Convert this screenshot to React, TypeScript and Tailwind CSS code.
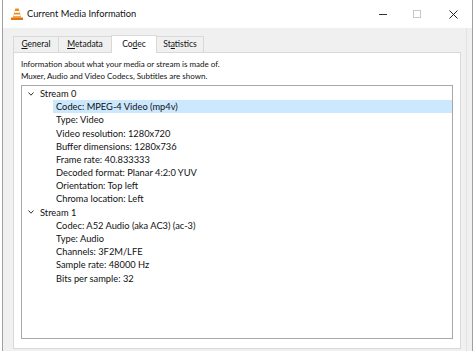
import React from "react";

const tabs = [
  { label: "General", u: 0, w: "w-[46px]" },
  { label: "Metadata", u: 0, w: "w-[54px]" },
  { label: "Codec", u: 2, w: "w-[46px]" },
  { label: "Statistics", u: 2, w: "w-[48px]" },
];

const streams = [
  {
    name: "Stream 0",
    items: [
      "Codec: MPEG-4 Video (mp4v)",
      "Type: Video",
      "Video resolution: 1280x720",
      "Buffer dimensions: 1280x736",
      "Frame rate: 40.833333",
      "Decoded format: Planar 4:2:0 YUV",
      "Orientation: Top left",
      "Chroma location: Left",
    ],
  },
  {
    name: "Stream 1",
    items: [
      "Codec: A52 Audio (aka AC3) (ac-3)",
      "Type: Audio",
      "Channels: 3F2M/LFE",
      "Sample rate: 48000 Hz",
      "Bits per sample: 32",
    ],
  },
];

function TabLabel({ label, u }: { label: string; u: number }) {
  return (
    <span>
      {label.slice(0, u)}
      <span className="underline underline-offset-1">{label[u]}</span>
      {label.slice(u + 1)}
    </span>
  );
}

function VlcIcon() {
  return (
    <svg width="14" height="14" viewBox="0 0 14 14">
      <path d="M5.3 1.5 L8.7 1.5 L11.2 10.5 L2.8 10.5 Z" fill="#f08a1c" />
      <path d="M4.6 4 L9.4 4 L9.9 5.8 L4.1 5.8 Z" fill="#fff" />
      <path d="M3.7 7.4 L10.3 7.4 L10.8 9.2 L3.2 9.2 Z" fill="#fff" />
      <rect x="1" y="10.5" width="12" height="2.5" rx="0.6" fill="#e07410" />
    </svg>
  );
}

export default function App() {
  return (
    <div className="w-[474px] h-[351px] bg-white overflow-hidden text-black" style={{ fontFamily: "Lato, 'Noto Sans', sans-serif" }}>
      <div className="ml-[2px] mr-[1px] h-full border-x border-[#a0a0a0] flex flex-col">
        {/* Title bar */}
        <div className="h-[28px] bg-white flex items-center shrink-0">
          <div className="pl-[7px] pr-[3px] flex items-center">
            <VlcIcon />
          </div>
          <span className="text-[9.3px] leading-none text-[#111]">Current Media Information</span>
          <div className="ml-auto flex items-center h-full">
            <div className="w-[34px] flex justify-center">
              <div className="w-[8px] h-px bg-[#333]" />
            </div>
            <div className="w-[34px] flex justify-center">
              <div className="w-[8px] h-[8px] border border-[#c8c8c8]" />
            </div>
            <div className="w-[38px] flex justify-center">
              <svg width="9" height="9" viewBox="0 0 9 9">
                <path d="M0.5 0.5 L8.5 8.5 M8.5 0.5 L0.5 8.5" stroke="#222" strokeWidth="1" />
              </svg>
            </div>
          </div>
        </div>

        {/* Body */}
        <div className="flex-1 bg-[#f0f0f0] pl-[10px] pr-[5px] pt-[7px] pb-[2px] flex">
          <div className="flex-1 flex flex-col mr-[5px]">
            <div className="flex items-end h-[17px] text-[8.5px] leading-none text-[#111]">
              {tabs.map((t) =>
                t.label === "Codec" ? (
                  <div key={t.label} className={`${t.w} h-[18px] -mb-px bg-white border border-b-0 border-[#d9d9d9] -mr-px flex items-center justify-center z-10`}>
                    <TabLabel label={t.label} u={t.u} />
                  </div>
                ) : (
                  <div key={t.label} className={`${t.w} h-[16px] bg-[#f0f0f0] border border-b-0 border-[#d9d9d9] -mr-px flex items-center justify-center`}>
                    <TabLabel label={t.label} u={t.u} />
                  </div>
                )
              )}
            </div>
            <div className="flex-1 bg-white border border-[#d9d9d9] px-[7px] pt-[5px] pb-[9px] flex flex-col">
              <div className="text-[8px] leading-[12px] text-[#111]">
                <div>Information about what your media or stream is made of.</div>
                <div>Muxer, Audio and Video Codecs, Subtitles are shown.</div>
              </div>
              <div className="mt-[3px] flex-1 border border-[#a8a8a8] pt-[1px] text-[9.3px] text-[#111]">
                {streams.map((s) => (
                  <div key={s.name}>
                    <div className="h-[13.2px] flex items-center">
                      <svg width="6" height="4" viewBox="0 0 6 4" className="ml-[6px] mr-[6px]">
                        <path d="M0.5 0.5 L3 3.2 L5.5 0.5" stroke="#333" strokeWidth="1" fill="none" />
                      </svg>
                      <span className="leading-none">{s.name}</span>
                    </div>
                    {s.items.map((it, i) => (
                      <div key={it} className={`h-[13.2px] flex items-center ml-[31px] pl-[3px] ${s.name === "Stream 0" && i === 0 ? "bg-[#cce8ff]" : ""}`}>
                        <span className="leading-none">{it}</span>
                      </div>
                    ))}
                  </div>
                ))}
              </div>
            </div>
          </div>
          <div className="w-px bg-[#e3e3e3] mt-[-7px] mb-[-2px]" />
        </div>
      </div>
    </div>
  );
}
